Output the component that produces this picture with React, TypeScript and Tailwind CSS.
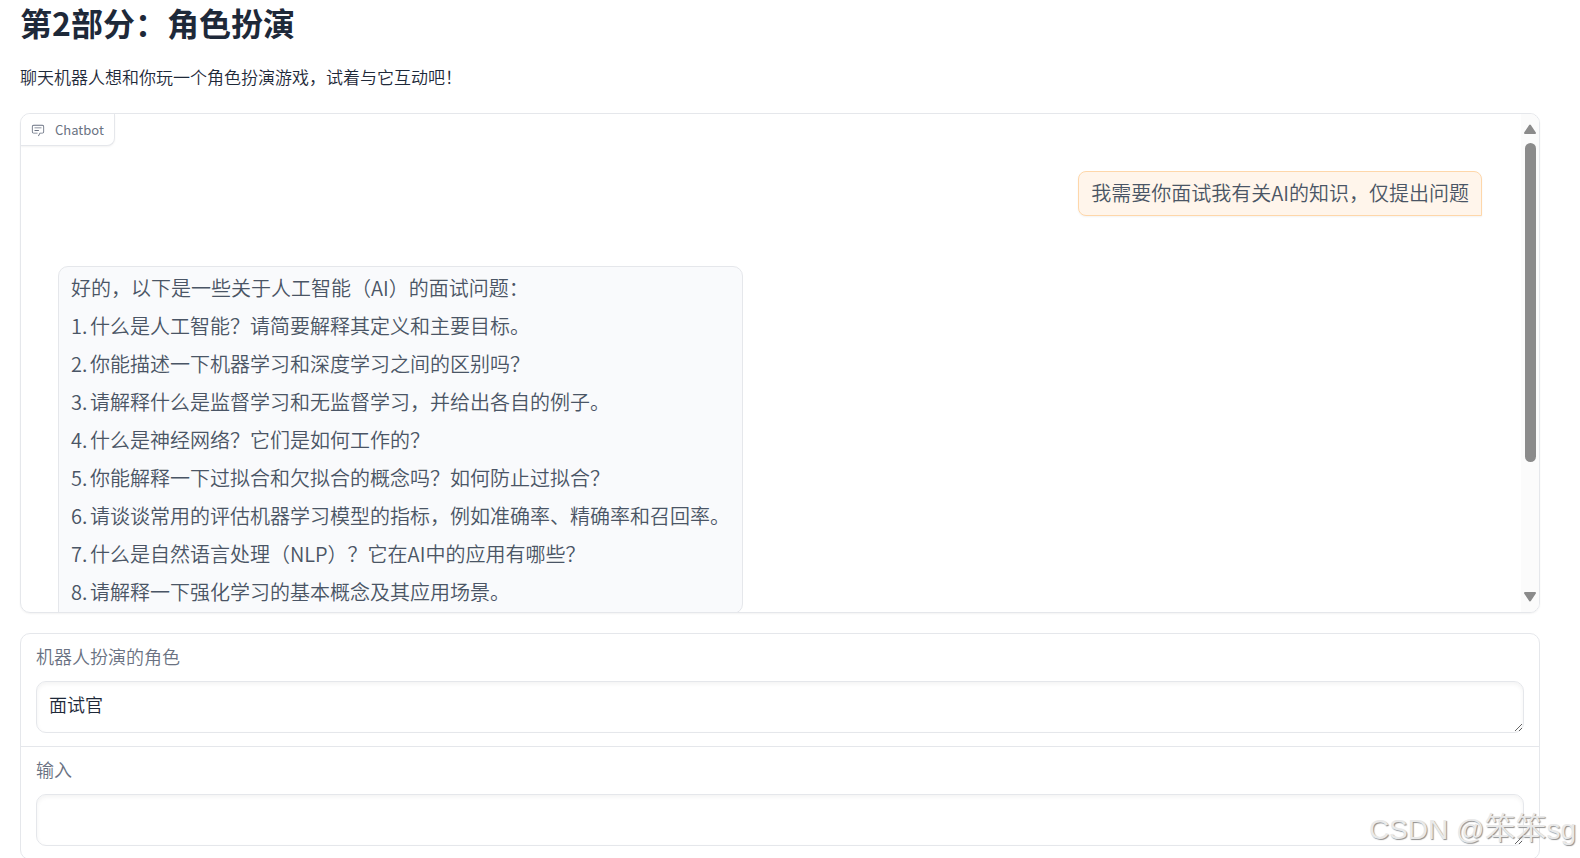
const questions = [
    "什么是人工智能？请简要解释其定义和主要目标。",
    "你能描述一下机器学习和深度学习之间的区别吗？",
    "请解释什么是监督学习和无监督学习，并给出各自的例子。",
    "什么是神经网络？它们是如何工作的？",
    "你能解释一下过拟合和欠拟合的概念吗？如何防止过拟合？",
    "请谈谈常用的评估机器学习模型的指标，例如准确率、精确率和召回率。",
    "什么是自然语言处理（NLP）？它在AI中的应用有哪些？",
    "请解释一下强化学习的基本概念及其应用场景。",
]

function ChatIcon() {
    return (
        <svg viewBox="0 0 32 32" className="w-[14px] h-[14px]" fill="currentColor" aria-hidden="true">
            <path d="M17.74 30L16 29l4-7h6a2 2 0 0 0 2-2V8a2 2 0 0 0-2-2H6a2 2 0 0 0-2 2v12a2 2 0 0 0 2 2h9v2H6a4 4 0 0 1-4-4V8a4 4 0 0 1 4-4h20a4 4 0 0 1 4 4v12a4 4 0 0 1-4 4h-4.84Z" />
            <path d="M8 10h16v2H8zm0 6h10v2H8z" />
        </svg>
    )
}

function Scrollbar() {
    return (
        <div className="w-[18px] shrink-0 bg-[#fbfbfb] flex flex-col items-center py-[10px]" aria-hidden="true">
            <svg viewBox="0 0 12 10" className="w-3 h-[10px]">
                <path d="M6 1.5L11 9H1Z" fill="#8b8b8b" stroke="#8b8b8b" strokeWidth="2" strokeLinejoin="round" />
            </svg>
            <div className="mt-[9px] w-[11px] h-2/3 rounded-full bg-[#8b8b8b]"></div>
            <svg viewBox="0 0 12 10" className="w-3 h-[10px] mt-auto">
                <path d="M6 8.5L1 1H11Z" fill="#8b8b8b" stroke="#8b8b8b" strokeWidth="2" strokeLinejoin="round" />
            </svg>
        </div>
    )
}

function Chatbot() {
    return (
        <section className="relative flex h-[500px] rounded-[10px] border border-gray-200 shadow-xs overflow-hidden">
            <div className="absolute top-0 left-0 flex items-center h-8 px-[10px] gap-[10px] border-r border-b border-gray-200 rounded-br-[8px] bg-white shadow-xs text-gray-500 text-[13px] font-normal">
                <ChatIcon />
                <span>Chatbot</span>
            </div>
            <div className="flex-1 flex flex-col gap-[50px] pt-[57px] px-[37px] text-[20px] text-gray-600">
                <div className="self-end mr-[2px] px-3 pt-[3px] pb-[5px] leading-[35px] rounded-[8px] rounded-br-none border border-[#fed7aa] bg-[#fff5eb] shadow-xs">
                    我需要你面试我有关AI的知识，仅提出问题
                </div>
                <div className="self-start px-3 py-[2px] leading-[38px] rounded-[10px] rounded-bl-none border border-gray-200 bg-[#f9fafc]">
                    <p>好的，以下是一些关于人工智能（AI）的面试问题：</p>
                    <ol className="list-none">
                        {questions.map((question, i) => (
                            <li key={question} className="flex">
                                <span className="w-[19px] shrink-0">{i + 1}.</span>
                                <span>{question}</span>
                            </li>
                        ))}
                    </ol>
                </div>
            </div>
            <Scrollbar />
        </section>
    )
}

function Field({ id, label, value }: { id: string; label: string; value?: string }) {
    return (
        <div className="px-[15px] pt-2 pb-[13px]">
            <label htmlFor={id} className="block mb-[11px] text-[18px] leading-[28px] text-gray-500">{label}</label>
            <textarea
                id={id}
                rows={1}
                defaultValue={value}
                className="block w-full h-[52px] px-3 py-2 text-[18px] leading-[28px] rounded-[10px] border border-gray-200 bg-white shadow-[inset_0_2px_4px_0_rgba(0,0,0,0.05)] resize-y overflow-hidden"
            />
        </div>
    )
}

function App() {
    return (
        <main
            lang="zh-CN"
            className="relative h-screen overflow-hidden bg-white pl-5 pr-10 text-gray-800 font-[350] font-['Noto_Sans_CJK_SC',sans-serif] [text-spacing-trim:space-all]"
        >
            <h1 className="text-[32px] leading-[44px] font-bold">第2部分：角色扮演</h1>
            <p className="mt-[19px] mb-[22px] text-[17px] leading-[28px]">聊天机器人想和你玩一个角色扮演游戏，试着与它互动吧！</p>
            <Chatbot />
            <form className="mt-5 rounded-[10px] border border-gray-200 divide-y divide-gray-200">
                <Field id="role" label="机器人扮演的角色" value="面试官" />
                <Field id="message" label="输入" />
            </form>
            <div className="absolute right-1 bottom-2 text-[28px] leading-[40px] text-[#e9e9e9] whitespace-nowrap pointer-events-none font-['Liberation_Sans','Noto_Sans_CJK_SC',sans-serif] [text-shadow:1px_1px_1px_#8f8f8f]">
                CSDN @<span className="text-[31px]">笨笨</span>sg
            </div>
        </main>
    )
}

export default App
